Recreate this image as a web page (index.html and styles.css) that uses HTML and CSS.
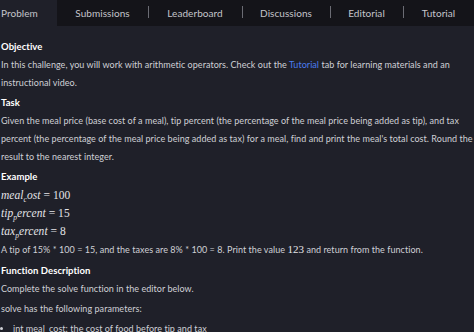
FILE: index.html
```html
<!DOCTYPE html>
<html lang="en">
<head>
  <meta charset="UTF-8">
  <title>Problem</title>
  <link rel="stylesheet" href="styles.css">
</head>
<body>
  <div class="tabs">
    <div class="tab active">Problem</div>
    <div class="tab submissions">Submissions</div>
    <div class="tab sep leaderboard">Leaderboard</div>
    <div class="tab sep discussions">Discussions</div>
    <div class="tab sep editorial">Editorial</div>
    <div class="tab sep last">Tutorial</div>
  </div>

  <div class="content">
    <h3>Objective</h3>
    <p>In this challenge, you will work with arithmetic operators. Check out the <a href="#">Tutorial</a> tab for learning materials and an instructional video.</p>

    <h3>Task</h3>
    <p>Given the meal price (base cost of a meal), tip percent (the percentage of the meal price being added as tip), and tax percent (the percentage of the meal price being added as tax) for a meal, find and print the meal's total cost. Round the result to the nearest integer.</p>

    <h3>Example</h3>
    <div class="math"><i>meal<sub>c</sub>ost</i> = 100</div>
    <div class="math"><i>tip<sub>p</sub>ercent</i> = 15</div>
    <div class="math"><i>tax<sub>p</sub>ercent</i> = 8</div>
    <p class="after-math">A tip of 15% * 100 = 15, and the taxes are 8% * 100 = 8. Print the value <span class="num">123</span> and return from the function.</p>

    <h3>Function Description</h3>
    <p>Complete the solve function in the editor below.</p>
    <p>solve has the following parameters:</p>
    <ul>
      <li>int meal_cost: the cost of food before tip and tax</li>
    </ul>
  </div>
</body>
</html>
```

FILE: styles.css
```css
body {
  margin: 0;
  background-color: #1f2029;
  color: #cfd0d6;
  font-family: "Lato", "Liberation Sans", sans-serif;
  font-size: 9px;
  font-variant-ligatures: none;
  letter-spacing: 0.05px;
  overflow: hidden;
}

.tabs {
  display: flex;
  height: 26px;
  background-color: #141419;
}

.tab {
  flex: none;
  display: flex;
  align-items: center;
  justify-content: center;
  color: #c4c5cb;
  font-size: 10px;
  position: relative;
}

.tab.active {
  width: 56px;
  padding-left: 1px;
  justify-content: flex-start;
  background-color: #1f2029;
}

.submissions { width: 91px; }
.leaderboard { width: 94px; }
.discussions { width: 88px; }
.editorial { width: 73px; }

.tab.last {
  flex: 1;
}

.tab.sep::before {
  content: "";
  position: absolute;
  left: 0;
  top: 6px;
  height: 12px;
  width: 1px;
  background-color: #6b6c74;
}

.content {
  padding: 12px 0 0 1px;
}

h3 {
  margin: 0;
  color: #ffffff;
  font-size: 9.5px;
  font-weight: bold;
  line-height: 18px;
}

p {
  margin: 0 0 2px;
  line-height: 18px;
}

a {
  color: #4a7cf0;
  text-decoration: none;
}

.math {
  font-family: "Liberation Serif", serif;
  font-size: 11.5px;
  line-height: 18px;
  color: #e4e4e8;
}

.math sub {
  font-size: 7.5px;
  line-height: 0;
}

.after-math {
  margin-top: 0;
  margin-bottom: 3px;
}

.num {
  font-family: "Liberation Serif", serif;
  font-size: 11px;
  color: #e4e4e8;
}

ul {
  margin: 0;
  padding-left: 12px;
  line-height: 18px;
}
```
